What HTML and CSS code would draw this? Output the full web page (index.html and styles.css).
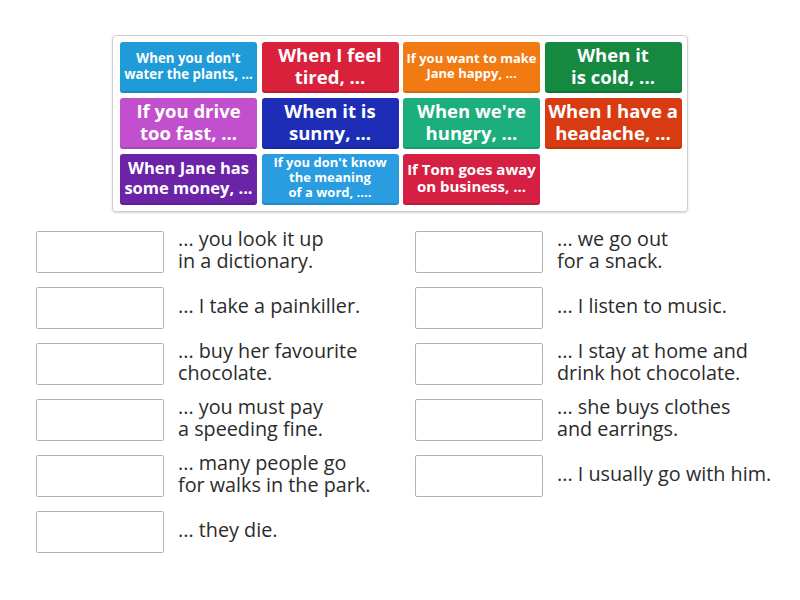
FILE: index.html
```html
<!DOCTYPE html>
<html>
<head>
<meta charset="utf-8">
<link rel="stylesheet" href="styles.css">
</head>
<body>
<div class="bank">
  <div class="tile c-blue fs13">When you don't<br>water the plants, ...</div>
  <div class="tile c-red fs18">When I feel<br>tired, ...</div>
  <div class="tile c-orange fs12">If you want to make<br>Jane happy, ...</div>
  <div class="tile c-green fs18">When it<br>is cold, ...</div>
  <div class="tile c-pink fs18">If you drive<br>too fast, ...</div>
  <div class="tile c-navy fs18">When it is<br>sunny, ...</div>
  <div class="tile c-teal fs18">When we're<br>hungry, ...</div>
  <div class="tile c-rust fs18">When I have a<br>headache, ...</div>
  <div class="tile c-purple fs16">When Jane has<br>some money, ...</div>
  <div class="tile c-sky fs12">If you don't know<br>the meaning<br>of a word, ....</div>
  <div class="tile c-crimson fs14">If Tom goes away<br>on business, ...</div>
</div>
<div class="answers">
  <div class="col">
    <div class="item"><div class="slot"></div><div class="txt">... you look it up<br>in a dictionary.</div></div>
    <div class="item"><div class="slot"></div><div class="txt">... I take a painkiller.</div></div>
    <div class="item"><div class="slot"></div><div class="txt">... buy her favourite<br>chocolate.</div></div>
    <div class="item"><div class="slot"></div><div class="txt">... you must pay<br>a speeding fine.</div></div>
    <div class="item"><div class="slot"></div><div class="txt">... many people go<br>for walks in the park.</div></div>
    <div class="item"><div class="slot"></div><div class="txt">... they die.</div></div>
  </div>
  <div class="col">
    <div class="item"><div class="slot"></div><div class="txt">... we go out<br>for a snack.</div></div>
    <div class="item"><div class="slot"></div><div class="txt">... I listen to music.</div></div>
    <div class="item"><div class="slot"></div><div class="txt">... I stay at home and<br>drink hot chocolate.</div></div>
    <div class="item"><div class="slot"></div><div class="txt">... she buys clothes<br>and earrings.</div></div>
    <div class="item"><div class="slot"></div><div class="txt">... I usually go with him.</div></div>
  </div>
</div>
</body>
</html>
```
FILE: styles.css
```css
* { box-sizing: border-box; }
body {
  margin: 0;
  background: #fff;
  font-family: "Open Sans", "Noto Sans", sans-serif;
}
.bank {
  margin: 35px 0 0 112px;
  width: 576px;
  height: 177px;
  padding: 6px 6px 6px 7px;
  border: 1px solid #cfcfcf;
  border-radius: 4px;
  box-shadow: 0 1px 2px rgba(0,0,0,0.18);
  display: grid;
  grid-template-columns: repeat(4, 137px);
  grid-auto-rows: 51px;
  column-gap: 4.5px;
  row-gap: 5px;
}
.tile {
  border-radius: 3px;
  color: #fff;
  font-weight: 700;
  text-align: center;
  display: flex;
  align-items: center;
  justify-content: center;
  white-space: nowrap;
  padding-bottom: 4px;
  box-shadow: inset 0 -2px 0 rgba(0,0,0,0.12);
}
.fs12 { font-size: 13px; line-height: 15px; }
.fs13 { font-size: 13.3px; line-height: 16px; }
.fs14 { font-size: 15px; line-height: 17px; }
.fs16 { font-size: 16.5px; line-height: 20px; }
.fs18 { font-size: 18.5px; line-height: 22px; }
.c-blue { background: #1f9bd8; }
.c-red { background: #d9213b; }
.c-orange { background: #f27a12; }
.c-green { background: #14893f; }
.c-pink { background: #c24fcd; }
.c-navy { background: #1d2db6; }
.c-teal { background: #1cae7c; }
.c-rust { background: #d83b11; }
.c-purple { background: #6b23a8; }
.c-sky { background: #2a9ce0; }
.c-crimson { background: #d51f43; }
.answers {
  display: flex;
  margin: 19px 0 0 36px;
}
.col {
  width: 379px;
  display: flex;
  flex-direction: column;
  gap: 14px;
}
.item {
  display: flex;
  align-items: center;
  gap: 14px;
  height: 42px;
}
.slot {
  width: 128px;
  height: 42px;
  flex: none;
  border: 1px solid #b3b3b3;
  border-radius: 2px;
  background: #fff;
}
.txt {
  font-size: 19.8px;
  line-height: 22px;
  color: #2b2b2b;
  white-space: nowrap;
  padding-bottom: 4px;
}
```
